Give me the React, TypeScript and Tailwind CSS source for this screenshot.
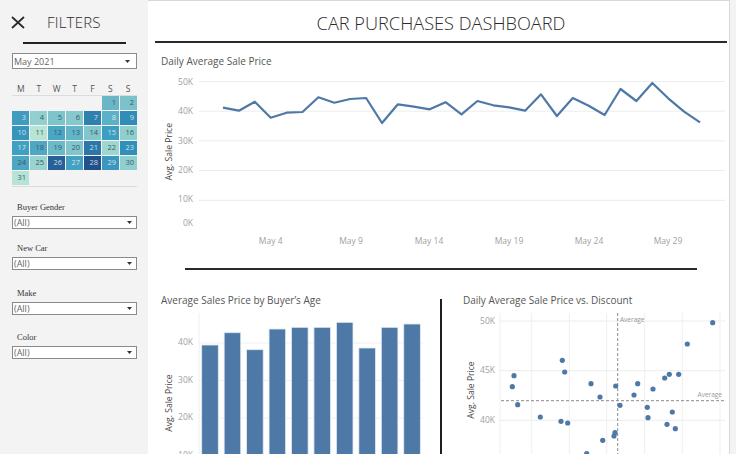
import React from "react";

const calDays: [number, string, boolean][] = [
  [1, "#69b6c7", false], [2, "#7cc2cc", false],
  [3, "#3f9cbf", true], [4, "#91d0cf", false], [5, "#7ec4cb", false], [6, "#86c8cc", false], [7, "#2e80ae", true], [8, "#5db1c6", true], [9, "#318db7", true],
  [10, "#3795bc", true], [11, "#b8e4d6", false], [12, "#4ba5c3", false], [13, "#62b5c6", false], [14, "#80c6cc", false], [15, "#3e9ec1", true], [16, "#8fcfce", false],
  [17, "#40a0c1", true], [18, "#4ea8c4", false], [19, "#6bbac9", false], [20, "#80c6cc", false], [21, "#2b78a8", true], [22, "#9ed6d1", false], [23, "#3090b9", true],
  [24, "#4da7c3", false], [25, "#98d3cf", false], [26, "#275f99", true], [27, "#43a2c2", true], [28, "#21508b", true], [29, "#3a98be", true], [30, "#8fcfce", false],
  [31, "#b6e3d6", false],
];

const lineYs = [107.7, 110.7, 101.7, 117.7, 112.7, 112, 97.3, 102.7, 99, 98, 123, 104.3, 106.7, 109.3, 102.2, 114.3, 101, 105.3, 107.3, 110.7, 94.3, 116, 98, 105.7, 115, 89, 101, 83, 98.3, 111.7, 122.3];

const barTops = [345, 332.7, 349.7, 329, 327.3, 327.3, 322.3, 348, 327.3, 324];

const dots: [number, number][] = [
  [514, 375.7], [512.3, 386.7], [517.7, 404.7], [540.3, 417], [562.3, 360.3], [564.7, 372], [561, 421.3], [567.7, 423],
  [591, 383.7], [600, 397], [602.7, 440.3], [586.7, 453.7], [615.7, 386], [620, 405.3], [615, 432.7], [614, 436],
  [634, 395], [637.7, 383.7], [647.3, 407.3], [648, 417.7], [653, 389], [664.7, 378], [669.3, 374.3], [678.7, 374.3],
  [672.3, 412], [667, 424.3], [675.3, 428.7], [687.3, 344], [712.7, 322.7],
];

const BLUE = "#4e79a7";

function Dropdown({ text }: { text: string }) {
  return (
    <div className="ml-[12px] w-[125px] h-[13px] border border-[#8a8a8a] bg-white flex items-center justify-between pl-[1px] pr-[4px]">
      <span className="text-[9px] leading-none text-[#666]">{text}</span>
      <svg width="5" height="3" viewBox="0 0 5 3">
        <path d="M0 0H5L2.5 3Z" fill="#333" />
      </svg>
    </div>
  );
}

function FilterLabel({ text }: { text: string }) {
  return (
    <div className="pl-[17px] h-[10px] flex items-center text-[8.5px] leading-none text-[#333] font-['Liberation_Serif',serif]">
      {text}
    </div>
  );
}

function Sidebar() {
  const cells: (null | [number, string, boolean])[] = [null, null, null, null, null, ...calDays];
  return (
    <aside className="w-[148px] shrink-0 bg-[#f3f3f3] flex flex-col">
      <div className="mt-[12px] h-[21px] flex items-center">
        <svg className="ml-[11px]" width="14" height="13" viewBox="0 0 14 13">
          <path d="M1 1L13 12M13 1L1 12" stroke="#2b2b2b" strokeWidth="1.8" />
        </svg>
        <span className="ml-[22px] text-[15px] font-light leading-none text-[#2b2b2b] tracking-[0.2px]">FILTERS</span>
      </div>
      <div className="mt-[9px] ml-[23px] w-[103px] h-[2px] bg-[#222]" />
      <div className="mt-[9px] ml-[12px] w-[125px] h-[16px] border border-[#8a8a8a] bg-white flex items-center justify-between pl-[1px] pr-[6px]">
        <span className="text-[9px] leading-none text-[#666]">May 2021</span>
        <svg width="5" height="3" viewBox="0 0 5 3">
          <path d="M0 0H5L2.5 3Z" fill="#333" />
        </svg>
      </div>
      <div className="mt-[15px] ml-[12px] w-[125px] grid grid-cols-7 h-[10px] items-center text-[8.5px] leading-none text-[#555]">
        {["M", "T", "W", "T", "F", "S", "S"].map((d, i) => (
          <div key={i} className="text-center">{d}</div>
        ))}
      </div>
      <div className="ml-[12px] w-[125px] mt-[1px] border-t border-[#dcdcdc]" />
      <div className="ml-[12px] w-[125px] grid grid-cols-7 gap-[1px] pb-[1px]">
        {cells.map((c, i) =>
          c ? (
            <div
              key={i}
              className="h-[14px] flex items-center justify-end pr-[3px] text-[7.5px] leading-none"
              style={{ backgroundColor: c[1], color: c[2] ? "rgba(230,240,246,0.85)" : "#3d5a66" }}
            >
              {c[0]}
            </div>
          ) : (
            <div key={i} className="h-[14px]" />
          )
        )}
      </div>
      <div className="ml-[12px] w-[125px] border-t border-[#dcdcdc]" />
      <div className="mt-[15px]"><FilterLabel text="Buyer Gender" /></div>
      <div className="mt-[4px]"><Dropdown text="(All)" /></div>
      <div className="mt-[14px]"><FilterLabel text="New Car" /></div>
      <div className="mt-[4px]"><Dropdown text="(All)" /></div>
      <div className="mt-[18px]"><FilterLabel text="Make" /></div>
      <div className="mt-[4px]"><Dropdown text="(All)" /></div>
      <div className="mt-[17px]"><FilterLabel text="Color" /></div>
      <div className="mt-[4px]"><Dropdown text="(All)" /></div>
    </aside>
  );
}

const tick = { fontSize: 8.5, fill: "#a0a0a0" } as const;
const ytitle = { fontSize: 8.6, fill: "#444" } as const;

function LineChart() {
  const grid = [81.5, 111.2, 140.9, 170.6, 200.3];
  const labels: [string, number][] = [["50K", 83], ["40K", 111.7], ["30K", 141.7], ["20K", 171], ["10K", 200], ["0K", 224]];
  const xl: [string, number][] = [["May 4", 270.7], ["May 9", 351], ["May 14", 429], ["May 19", 509], ["May 24", 589], ["May 29", 668]];
  const pts = lineYs.map((y, i) => `${(223 + i * 15.9).toFixed(1)},${y}`).join(" ");
  return (
    <svg width="581" height="198" viewBox="148 70 581 198" className="block">
      {grid.map((y) => (
        <line key={y} x1="199" x2="725" y1={y} y2={y} stroke="#ececec" strokeWidth="1" />
      ))}
      {labels.map(([t, y]) => (
        <text key={t} x="193" y={y} textAnchor="end" dominantBaseline="middle" style={tick}>{t}</text>
      ))}
      {xl.map(([t, x]) => (
        <text key={t} x={x} y="241.7" textAnchor="middle" dominantBaseline="middle" style={tick}>{t}</text>
      ))}
      <text x="169.5" y="151.7" transform="rotate(-90 169.5 151.7)" textAnchor="middle" dominantBaseline="middle" style={ytitle}>Avg. Sale Price</text>
      <polyline points={pts} fill="none" stroke={BLUE} strokeWidth="2.2" strokeLinejoin="round" />
    </svg>
  );
}

function BarChart() {
  const grid = [343, 380.5, 418];
  const labels: [string, number][] = [["40K", 343], ["30K", 380.7], ["20K", 418], ["10K", 455.5]];
  return (
    <svg width="292" height="144" viewBox="148 310 292 144" className="block">
      <line x1="199" x2="199" y1="313" y2="454" stroke="#f0f0f0" />
      {grid.map((y) => (
        <line key={y} x1="199" x2="423" y1={y} y2={y} stroke="#efefef" strokeWidth="1" />
      ))}
      {labels.map(([t, y]) => (
        <text key={t} x="193" y={y} textAnchor="end" dominantBaseline="middle" style={tick}>{t}</text>
      ))}
      {barTops.map((t, i) => (
        <rect key={i} x={201.7 + i * 22.45} y={t} width="16.6" height={470 - t} fill={BLUE} stroke="#e4ebf3" strokeWidth="0.8" />
      ))}
      <text x="170" y="403" transform="rotate(-90 170 403)" textAnchor="middle" dominantBaseline="middle" style={ytitle}>Avg. Sale Price</text>
    </svg>
  );
}

function Scatter() {
  const hgrid = [321, 370.7, 420.3];
  const vgrid = [500, 531.7, 569.3, 606.7, 644.7, 682.3, 720];
  const labels: [string, number][] = [["50K", 321.7], ["45K", 370.7], ["40K", 421]];
  return (
    <svg width="287" height="144" viewBox="442 310 287 144" className="block">
      {hgrid.map((y) => (
        <line key={y} x1="500" x2="725" y1={y} y2={y} stroke="#ececec" strokeWidth="1" />
      ))}
      {vgrid.map((x) => (
        <line key={x} x1={x} x2={x} y1="313" y2="454" stroke="#efefef" strokeWidth="1" />
      ))}
      {labels.map(([t, y]) => (
        <text key={t} x="495" y={y} textAnchor="end" dominantBaseline="middle" style={tick}>{t}</text>
      ))}
      <line x1="617.7" x2="617.7" y1="313" y2="454" stroke="#8a8a8a" strokeWidth="1" strokeDasharray="3 2" />
      <line x1="501" x2="725" y1="400.7" y2="400.7" stroke="#8a8a8a" strokeWidth="1" strokeDasharray="3 2" />
      <text x="620" y="320" dominantBaseline="middle" style={{ fontSize: 6.5, fill: "#999" }}>Average</text>
      <text x="722" y="395.7" textAnchor="end" dominantBaseline="middle" style={{ fontSize: 6.5, fill: "#999" }}>Average</text>
      {dots.map(([x, y], i) => (
        <circle key={i} cx={x} cy={y} r="2.6" fill={BLUE} />
      ))}
      <text x="471.7" y="390" transform="rotate(-90 471.7 390)" textAnchor="middle" dominantBaseline="middle" style={ytitle}>Avg. Sale Price</text>
    </svg>
  );
}

export default function App() {
  return (
    <div className="w-[736px] h-[454px] overflow-hidden bg-[#f3f3f3] flex font-['Open_Sans',sans-serif]">
      <Sidebar />
      <main className="w-[582px] h-[454px] bg-white border-t border-r border-[#d8d8d8] flex flex-col">
        <div className="h-[40px] pt-[10px] pl-[5px] text-center text-[18.2px] leading-[24px] font-light text-[#2b2b2b]">
          CAR PURCHASES DASHBOARD
        </div>
        <div className="ml-[7px] w-[572px] h-[2px] bg-[#2a2a2a]" />
        <div className="h-[27px] pt-[12px] pl-[13px] text-[10px] leading-[12px] text-[#555]">Daily Average Sale Price</div>
        <LineChart />
        <div className="ml-[37px] w-[512px] h-[2px] bg-[#2a2a2a]" />
        <div className="flex flex-1 min-h-0">
          <div className="w-[292px] flex flex-col">
            <div className="h-[40px] pt-[24px] pl-[13px] text-[10px] leading-[12px] text-[#555]">Average Sales Price by Buyer’s Age</div>
            <BarChart />
          </div>
          <div className="w-[2px] mt-[29px] bg-[#1f1f1f]" />
          <div className="w-[287px] flex flex-col">
            <div className="h-[40px] pt-[24px] pl-[21px] text-[10px] leading-[12px] text-[#555]">Daily Average Sale Price vs. Discount</div>
            <Scatter />
          </div>
        </div>
      </main>
    </div>
  );
}
